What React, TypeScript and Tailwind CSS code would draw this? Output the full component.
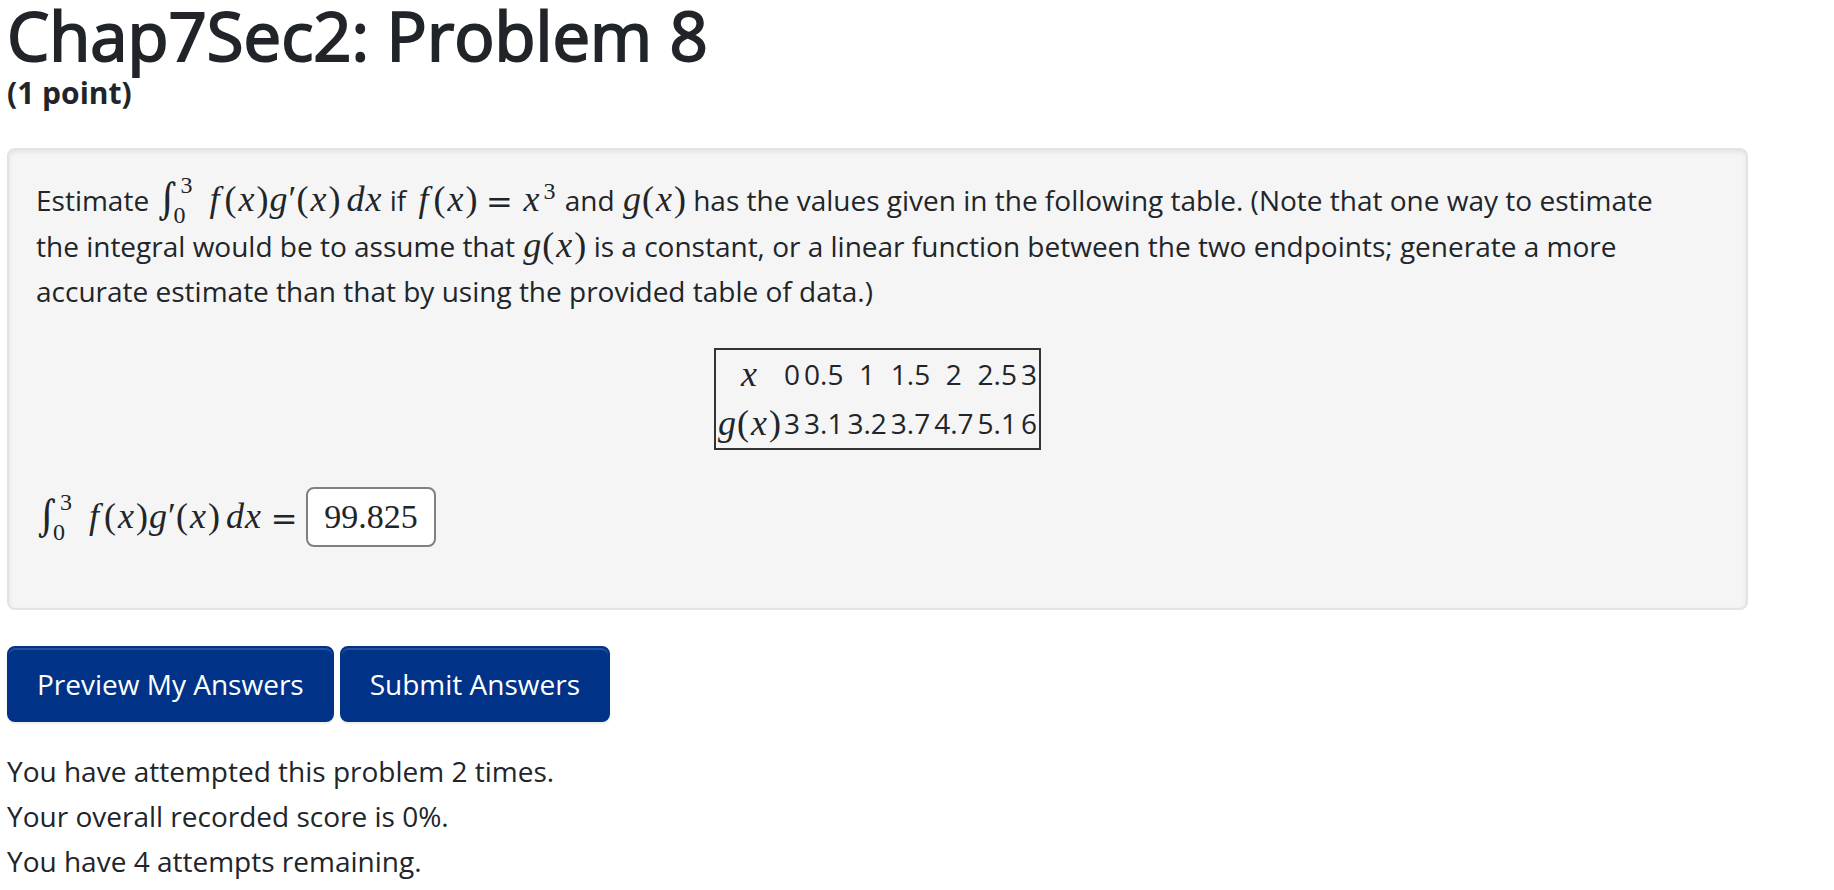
import type { ReactNode } from "react";

function Sym({ children, w, italic = false }: { children: ReactNode; w: string; italic?: boolean }) {
  return <span className={`inline-block text-center ${w} ${italic ? "italic" : ""}`}>{children}</span>;
}

function MathText({ children }: { children: ReactNode }) {
  return (
    <span className="inline-block h-[45px] align-baseline font-['Liberation_Serif',serif] text-[36px] leading-[45px] whitespace-nowrap">
      {children}
    </span>
  );
}

function Arg() {
  return (
    <>
      <Sym w="w-3">(</Sym>
      <Sym w="w-5" italic>x</Sym>
      <Sym w="w-3">)</Sym>
    </>
  );
}

function Fn({ name }: { name: string }) {
  return (
    <>
      <Sym w="w-5" italic>{name}</Sym>
      <Arg />
    </>
  );
}

function Equals() {
  return (
    <span className="inline-block w-11 text-center font-['DejaVu_Math_TeX_Gyre','Liberation_Serif',serif] text-[32px] leading-none">
      =
    </span>
  );
}

function Integral({ equals = false }: { equals?: boolean }) {
  return (
    <MathText>
      <span className="relative inline-block w-12">
        <span className="font-['DejaVu_Math_TeX_Gyre','Liberation_Serif',serif] text-[36px] leading-none">∫</span>
        <sup className="absolute top-[-4px] left-[24px] text-2xl leading-none">3</sup>
        <sub className="absolute bottom-[-5px] left-[17px] text-2xl leading-none">0</sub>
      </span>
      <Fn name="f" />
      <Sym w="w-5" italic>g</Sym>
      <Sym w="w-2">′</Sym>
      <Arg />
      <span className="inline-block w-1.5" />
      <Sym w="w-[18px]" italic>d</Sym>
      <Sym w="w-[18px]" italic>x</Sym>
      {equals && <Equals />}
    </MathText>
  );
}

const xs = ["0", "0.5", "1", "1.5", "2", "2.5", "3"];
const gs = ["3", "3.1", "3.2", "3.7", "4.7", "5.1", "6"];

const button =
  "h-[76px] rounded-lg border-2 border-[#003388] bg-[#003388] px-7 text-white shadow-[inset_0_2px_0_rgba(255,255,255,0.15),0_2px_2px_rgba(0,0,0,0.075)]";

export default function App() {
  return (
    <main className="min-h-screen bg-white pr-[86px] pl-[7px] font-['Open_Sans','Noto_Sans',sans-serif] text-[28px] leading-[45px] text-[#212529]">
      <h1 className="text-[67px] leading-[70px] [-webkit-text-stroke:2px_#212529]">Chap7Sec2: Problem 8</h1>
      <p className="text-[30px] font-bold">(1 point)</p>

      <section className="mt-[33px] h-[462px] rounded-lg border-2 border-[#e3e3e3] bg-[#f5f5f5] px-[27px] pt-[27px] shadow-[inset_0_2px_4px_rgba(0,0,0,0.08)]">
        <p className="pr-12">
          Estimate <Integral /> if{" "}
          <MathText>
            <Fn name="f" />
            <Equals />
            <Sym w="w-5" italic>x</Sym>
            <sup className="px-0.5 text-2xl leading-none">3</sup>
          </MathText>{" "}
          and <MathText><Fn name="g" /></MathText> has the values given in the following table. (Note that one way to
          estimate the integral would be to assume that <MathText><Fn name="g" /></MathText> is a constant, or a linear
          function between the two endpoints; generate a more accurate estimate than that by using the provided table of
          data.)
        </p>

        <table className="mx-auto mt-[34px] border-2 border-[#333333] text-center">
          <tbody>
            <tr>
              <th scope="row" className="h-[50px] px-px py-0 font-normal">
                <MathText><Sym w="w-5" italic>x</Sym></MathText>
              </th>
              {xs.map((v) => (
                <td key={v} className="px-0.5">{v}</td>
              ))}
            </tr>
            <tr>
              <th scope="row" className="h-[50px] px-px py-0 font-normal">
                <MathText><Fn name="g" /></MathText>
              </th>
              {gs.map((v) => (
                <td key={v} className="px-0.5">{v}</td>
              ))}
            </tr>
          </tbody>
        </table>

        <div className="mt-[37px] flex items-center">
          <label htmlFor="answer">
            <Integral equals />
          </label>
          <input
            id="answer"
            type="text"
            defaultValue="99.825"
            className="h-[60px] w-[130px] rounded-lg border-2 border-[#808080] bg-white text-center font-['Liberation_Serif',serif] text-[34px]"
          />
        </div>
      </section>

      <div className="mt-9 flex gap-1.5">
        <button type="button" className={button}>Preview My Answers</button>
        <button type="submit" className={button}>Submit Answers</button>
      </div>

      <div className="mt-[27px]">
        <p>You have attempted this problem 2 times.</p>
        <p>Your overall recorded score is 0%.</p>
        <p>You have 4 attempts remaining.</p>
      </div>
    </main>
  );
}
